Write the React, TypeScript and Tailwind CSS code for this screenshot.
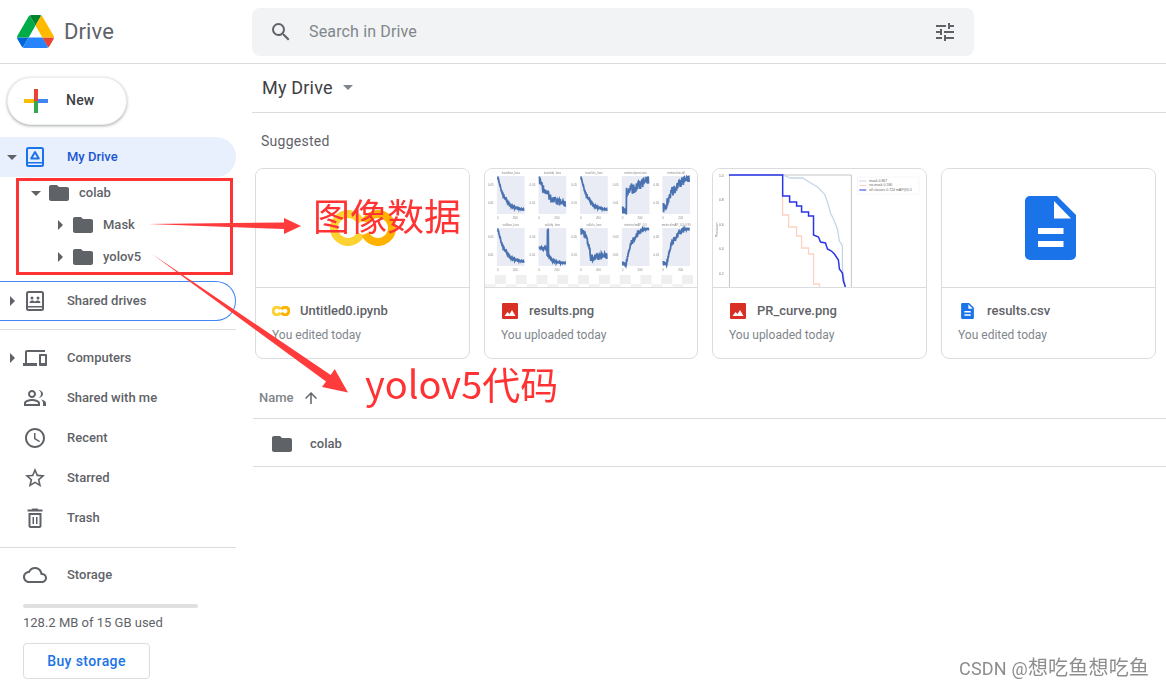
import type { ReactNode } from "react";

const grey = "#5f6368";

const Mi = ({ d, size = 24, color = grey }: { d: string; size?: number; color?: string }) => (
  <svg width={size} height={size} viewBox="0 0 24 24" fill={color} className="shrink-0">
    <path d={d} />
  </svg>
);

const folder = "M10 4H4c-1.1 0-2 .9-2 2v12c0 1.1.9 2 2 2h16c1.1 0 2-.9 2-2V8c0-1.1-.9-2-2-2h-8l-2-2z";

const Caret = ({ open = false }: { open?: boolean }) =>
  open ? (
    <span className="h-0 w-0 shrink-0 border-x-[5px] border-t-[5px] border-x-transparent border-t-[#5f6368]" />
  ) : (
    <span className="h-0 w-0 shrink-0 border-y-[5px] border-l-[5px] border-y-transparent border-l-[#5f6368]" />
  );

const DriveLogo = () => (
  <svg width="37" height="33" viewBox="0 0 87.3 78" className="shrink-0">
    <path d="m6.6 66.85 3.85 6.65c.8 1.4 1.95 2.5 3.3 3.3l13.75-23.8h-27.5c0 1.55.4 3.1 1.2 4.5z" fill="#0066da" />
    <path d="m43.65 25-13.75-23.8c-1.35.8-2.5 1.9-3.3 3.3l-25.4 44a9.06 9.06 0 0 0 -1.2 4.5h27.5z" fill="#00ac47" />
    <path d="m73.55 76.8c1.35-.8 2.5-1.9 3.3-3.3l1.6-2.75 7.65-13.25c.8-1.4 1.2-2.95 1.2-4.5h-27.502l5.852 11.5z" fill="#ea4335" />
    <path d="m43.65 25 13.75-23.8c-1.35-.8-2.9-1.2-4.5-1.2h-18.5c-1.6 0-3.15.45-4.5 1.2z" fill="#00832d" />
    <path d="m59.8 53h-32.3l-13.75 23.8c1.35.8 2.9 1.2 4.5 1.2h50.8c1.6 0 3.15-.45 4.5-1.2z" fill="#2684fc" />
    <path d="m73.4 26.5-12.7-22c-.8-1.4-1.95-2.5-3.3-3.3l-13.75 23.8 16.15 28h27.45c0-1.55-.4-3.1-1.2-4.5z" fill="#ffba00" />
  </svg>
);

const PlusIcon = () => (
  <svg width="24" height="24" viewBox="0 0 24 24" className="shrink-0">
    <rect x="0" y="10" width="12" height="4" fill="#fbbc04" />
    <rect x="12" y="10" width="12" height="4" fill="#4285f4" />
    <rect x="10" y="0" width="4" height="12" fill="#ea4335" />
    <rect x="10" y="12" width="4" height="12" fill="#34a853" />
  </svg>
);

const MyDriveIcon = () => (
  <svg width="18" height="20" viewBox="0 0 18 20" className="shrink-0">
    <rect x="1" y="1" width="16" height="18" rx="1.5" fill="none" stroke="#1a73e8" strokeWidth="2" />
    <path d="M9 5 12.800 11.500H5.200z" fill="none" stroke="#1a73e8" strokeWidth="2" strokeLinejoin="round" />
    <rect x="2" y="15" width="14" height="1.500" fill="#1a73e8" />
  </svg>
);

const SharedDrivesIcon = () => (
  <svg width="18" height="20" viewBox="0 0 18 20" className="shrink-0">
    <rect x="1" y="1" width="16" height="18" rx="1.5" fill="none" stroke={grey} strokeWidth="2" />
    <circle cx="6" cy="7" r="1.500" fill={grey} />
    <circle cx="12" cy="7" r="1.500" fill={grey} />
    <path d="M3.500 12c0-1.500 1.200-2.500 2.500-2.500s2.300.5 3 1.200c.7-.7 1.700-1.200 3-1.200s2.500 1 2.500 2.500z" fill={grey} />
    <rect x="2" y="15" width="14" height="1.500" fill={grey} />
  </svg>
);

const TreeRow = ({ label, indent, open }: { label: string; indent: string; open?: boolean }) => (
  <div className={`flex h-8 items-center ${indent}`}>
    <span className="flex w-2 justify-center">
      <Caret open={open} />
    </span>
    <span className="ml-[7px]">
      <Mi d={folder} />
    </span>
    <span className="ml-2 text-[13px] font-medium text-[#5f6368]">{label}</span>
  </div>
);

const NavRow = ({ label, icon, caret }: { label: string; icon: ReactNode; caret?: boolean }) => (
  <div className="flex h-10 w-[236px] items-center">
    <span className="flex w-[23px] justify-center pl-[2px]">{caret && <Caret />}</span>
    <span className="flex w-6 justify-center">{icon}</span>
    <span className="ml-5 text-[13px] font-medium text-[#5f6368]">{label}</span>
  </div>
);

const Sidebar = () => (
  <aside className="w-[252px] shrink-0">
    <div className="pl-[7px] pt-[13px]">
      <button className="flex h-12 w-[120px] items-center rounded-full border border-[#eceef0] bg-white pb-px pl-4 shadow-[0_1px_3px_rgba(60,64,67,0.45)]">
        <PlusIcon />
        <span className="ml-[18px] text-[14px] font-medium tracking-[0.2px] text-[#3c4043]">New</span>
      </button>
    </div>

    <div className="mt-3 flex h-10 w-[236px] items-center rounded-r-full bg-[#e8f0fe]">
      <span className="flex w-[23px] justify-center pl-[1px]">
        <Caret open />
      </span>
      <span className="flex w-6 justify-center">
        <MyDriveIcon />
      </span>
      <span className="ml-5 text-[13px] font-medium text-[#1a56d0]">My Drive</span>
    </div>

    <TreeRow label="colab" indent="pl-8" open />
    <TreeRow label="Mask" indent="pl-14" />
    <TreeRow label="yolov5" indent="pl-14" />

    <div className="mt-2 flex h-10 w-[236px] items-center rounded-r-full border border-l-0 border-[#4285f4]">
      <span className="flex w-[23px] justify-center pl-[2px]">
        <Caret />
      </span>
      <span className="flex w-6 justify-center">
        <SharedDrivesIcon />
      </span>
      <span className="ml-5 text-[13px] font-medium text-[#5f6368]">Shared drives</span>
    </div>

    <div className="mt-2 h-px w-[236px] bg-[#dadce0]" />

    <div className="mt-2">
      <NavRow label="Computers" caret icon={<Mi d="M4 6h18V4H4c-1.100 0-2 .9-2 2v11H0v3h14v-3H4V6zm19 2h-6c-.55 0-1 .45-1 1v10c0 .55.45 1 1 1h6c.55 0 1-.45 1-1V9c0-.55-.45-1-1-1zm-1 9h-4v-7h4v7z" />} />
      <NavRow label="Shared with me" icon={<Mi d="M9 12c2.200 0 4-1.800 4-4S11.200 4 9 4 5 5.800 5 8s1.800 4 4 4zm0-6c1.100 0 2 .9 2 2s-.9 2-2 2-2-.9-2-2 .9-2 2-2zm0 7c-2.700 0-8 1.300-8 4v3h16v-3c0-2.700-5.300-4-8-4zm6 5H3v-.99C3.200 16.300 6.300 15 9 15s5.800 1.300 6 2v1zM15.500 4.100c1.300.6 2.500 2 2.500 3.900s-1.200 3.300-2.500 3.900c2-.1 4.500-1.700 4.500-3.900s-2.500-3.800-4.500-3.900zM18 13.500c1.400 1 2 2.300 2 3.500v3h3v-3c0-1.800-2.500-3-5-3.500z" />} />
      <NavRow label="Recent" icon={<Mi d="M11.990 2C6.470 2 2 6.480 2 12s4.470 10 9.990 10C17.520 22 22 17.520 22 12S17.520 2 11.990 2zM12 20c-4.420 0-8-3.580-8-8s3.580-8 8-8 8 3.580 8 8-3.580 8-8 8zm.5-13H11v6l5.250 3.150.75-1.230-4.500-2.670z" />} />
      <NavRow label="Starred" icon={<Mi d="M22 9.240l-7.190-.62L12 2 9.190 8.630 2 9.240l5.460 4.730L5.820 21 12 17.270 18.180 21l-1.630-7.030L22 9.240zM12 15.400l-3.760 2.270 1-4.280-3.320-2.880 4.380-.38L12 6.100l1.710 4.040 4.380.38-3.320 2.880 1 4.280L12 15.400z" />} />
      <NavRow label="Trash" icon={<Mi d="M5.500 20c0 1.100.9 2 2 2h9c1.100 0 2-.9 2-2V7h-13v13zM7.500 9h9v11h-9V9zm8-5.500-1-1h-5l-1 1H4.500v2h15v-2zM9.500 11H11v7H9.500zm3.500 0h1.500v7H13z" />} />
    </div>

    <div className="mt-[9px] h-px w-[236px] bg-[#dadce0]" />

    <div className="mt-[7px] flex h-10 items-center">
      <span className="ml-[23px] flex w-6 justify-center">
        <Mi d="M19.350 10.040C18.670 6.590 15.640 4 12 4 9.110 4 6.600 5.640 5.350 8.040 2.340 8.360 0 10.910 0 14c0 3.310 2.690 6 6 6h13c2.760 0 5-2.240 5-5 0-2.640-2.050-4.780-4.650-4.960zM19 18H6c-2.210 0-4-1.790-4-4 0-2.050 1.530-3.760 3.560-3.970l1.070-.11.5-.95C8.080 7.140 9.940 6 12 6c2.620 0 4.880 1.860 5.390 4.430l.3 1.500 1.530.11c1.560.1 2.780 1.410 2.780 2.960 0 1.650-1.350 3-3 3z" />
      </span>
      <span className="ml-5 text-[13px] font-medium text-[#5f6368]">Storage</span>
    </div>
    <div className="ml-[23px] mt-[9px] h-1 w-[175px] rounded-full bg-[#e0e0e0]" />
    <p className="ml-[23px] mt-[6px] text-[13px] leading-[18px] text-[#5f6368]">128.2 MB of 15 GB used</p>
    <button className="ml-[23px] mt-[11px] h-[36px] w-[127px] rounded border border-[#dadce0] bg-white text-[14px] font-medium tracking-[0.4px] text-[#1a73e8]">
      Buy storage
    </button>
  </aside>
);

// small matplotlib style plots of the results.png thumbnail
const plots = [
  { x: 12, y: 7, kind: "down", noise: 3, title: "train/box_loss" },
  { x: 54, y: 7, kind: "slow", noise: 8, title: "train/obj_loss" },
  { x: 96, y: 7, kind: "down", noise: 3, title: "train/cls_loss" },
  { x: 138, y: 7, kind: "jump", noise: 11, title: "metrics/precision" },
  { x: 179, y: 7, kind: "up", noise: 10, title: "metrics/recall" },
  { x: 12, y: 59, kind: "down", noise: 3, title: "val/box_loss" },
  { x: 54, y: 59, kind: "spike", noise: 3, title: "val/obj_loss" },
  { x: 96, y: 59, kind: "plateau", noise: 8, title: "val/cls_loss" },
  { x: 138, y: 59, kind: "up2", noise: 5, title: "metrics/mAP_0.5" },
  { x: 179, y: 59, kind: "up2", noise: 6, title: "metrics/mAP_0.5:0.95" },
];

// height above the plot floor for each kind of run
const level = (kind: string, t: number, i: number) => {
  if (kind === "down") return 2 + 34 * Math.exp(-t * 3.6);
  if (kind === "slow") return 5 + 28 * Math.exp(-t * 2.2);
  if (kind === "plateau") return t < 0.35 ? 34 - t * 20 - (t > 0.2 ? (t - 0.2) * 100 : 0) : 8;
  if (kind === "spike") return t < 0.3 ? 17 : t < 0.36 ? (i % 2 ? 35 : 8) : 1 + 8 * Math.exp(-(t - 0.36) * 5);
  if (kind === "jump") return t < 0.15 ? 1 : 20 + 12 * t;
  if (kind === "up") return t < 0.12 ? 5 : 36 * (1 - Math.exp(-t * 2.6));
  return t < 0.12 ? 1 : 37 * (1 - Math.exp(-(t - 0.12) * 4));
};

const curve = (kind: string, noise: number) => {
  const pts: string[] = [];
  for (let i = 0; i <= 80; i++) {
    const t = i / 80;
    const n = Math.sin(i * 12.9898) * 43758.5453;
    const r = (n - Math.floor(n) - 0.5) * noise;
    const y = 37 - level(kind, t, i) + r;
    pts.push(`${(t * 26 + 1).toFixed(1)},${Math.min(37.5, Math.max(0.5, y)).toFixed(1)}`);
  }
  return pts.join(" ");
};

const ResultsThumb = () => (
  <svg viewBox="0 0 214 118" className="h-full w-full blur-[0.6px]" preserveAspectRatio="none">
    {plots.map((p) => (
      <g key={p.title} transform={`translate(${p.x} ${p.y})`} fontFamily="Liberation Sans, sans-serif" fill="#888">
        <rect width="28" height="38" fill="#e9ecf5" />
        <polyline points={curve(p.kind, p.noise)} fill="none" stroke="#4a72b0" strokeWidth="1.800" />
        <text x="14" y="-2" fontSize="3" textAnchor="middle">{p.title}</text>
        <text x="-9" y="10" fontSize="3">0.05</text>
        <text x="-9" y="28" fontSize="3">0.01</text>
        <text x="0" y="43" fontSize="3">0</text>
        <text x="16" y="43" fontSize="3">200</text>
      </g>
    ))}
    {[10, 31, 52, 73, 94, 115, 136, 157, 178, 199].map((x) => (
      <rect key={x} x={x} y="106" width="11" height="9" fill="#efefef" />
    ))}
    {[0, 21, 42, 63, 84, 105, 126, 147, 168, 189].map((x) => (
      <rect key={x} x={x} y="115" width="11" height="3" fill="#f3f3f3" />
    ))}
  </svg>
);

const PrThumb = () => (
  <svg viewBox="0 0 214 118" className="h-full w-full blur-[0.4px]" preserveAspectRatio="none">
    <path d="M16.500 118V6H139V118" fill="none" stroke="#c4c4c4" strokeWidth="1" />
    <polyline points="70,6 78,9 90,9 95,12 105,18 112,25 115,33 118,44 121,50 125,60 127,72 130,77 130,100 132,112 133,118" fill="none" stroke="#c4d5ea" strokeWidth="1.300" />
    <polyline points="70,27 70,46 76,46 76,58 84,58 84,67 89,67 89,79 96,79 96,85 101,85 101,115 107,115 107,118" fill="none" stroke="#fdd2c4" strokeWidth="1.300" />
    <polyline points="16,6 70,6 70,27 77,27 77,33 84,33 84,37 89,37 89,43 96,43 96,47 101,47 101,66 106,68 108,73 113,74 115,80 119,82 122,85 126,91 127,100 130,104 131,112 133,118" fill="none" stroke="#2a35e8" strokeWidth="1.500" />
    {[
      ["1.0", 8],
      ["0.8", 32],
      ["0.6", 57],
      ["0.4", 81],
      ["0.2", 106],
    ].map(([t, y]) => (
      <text key={t} x="6" y={y} fontSize="3.500" fill="#777" fontFamily="Liberation Sans, sans-serif">{t}</text>
    ))}
    <text x="5" y="68" fontSize="3.500" fill="#777" fontFamily="Liberation Sans, sans-serif" transform="rotate(-90 5 68)">Precision</text>
    <rect x="145" y="8" width="62" height="17" fill="#fff" stroke="#eeeeee" strokeWidth="0.5" />
    <path d="M147 12h7" stroke="#c4d5ea" />
    <path d="M147 16.500h7" stroke="#fdd2c4" />
    <path d="M147 21h7" stroke="#2a35e8" />
    <text x="157" y="13" fontSize="3.500" fill="#666" fontFamily="Liberation Sans, sans-serif">mask 0.867</text>
    <text x="157" y="17.500" fontSize="3.500" fill="#666" fontFamily="Liberation Sans, sans-serif">no-mask 0.580</text>
    <text x="157" y="22" fontSize="3.500" fill="#666" fontFamily="Liberation Sans, sans-serif">all classes 0.724 mAP@0.5</text>
  </svg>
);

const ColabMark = ({ width, height, stroke = 8 }: { width: number; height: number; stroke?: number }) => (
  <svg width={width} height={height} viewBox="0 0 66 36" className="shrink-0">
    <path d="M30.700 12.100A14 14 0 1 0 30.700 23.900" fill="none" stroke="#ffd233" strokeWidth={stroke} />
    <path d="M35.300 12.100A14 14 0 1 1 35.300 23.900" fill="none" stroke="#ffb300" strokeWidth={stroke} />
  </svg>
);

const DocIcon = ({ width, height }: { width: number; height: number }) => (
  <svg width={width} height={height} viewBox="0 0 51 64" className="shrink-0">
    <path d="M5 0H32L51 19V59a5 5 0 0 1-5 5H5a5 5 0 0 1-5-5V5a5 5 0 0 1 5-5z" fill="#1a73e8" />
    <path d="M29 5 46 22.500H29z" fill="#fff" />
    <rect x="13" y="32" width="25.500" height="6" fill="#fff" />
    <rect x="13" y="45" width="25.500" height="6" fill="#fff" />
  </svg>
);

const ImageIcon = () => (
  <svg width="16" height="16" viewBox="0 0 16 16" className="shrink-0">
    <rect width="16" height="16" rx="1" fill="#d93025" />
    <path d="M2.500 13 5.500 9 7.500 11 10 7 13.500 13z" fill="#fff" />
  </svg>
);

const Card = ({ thumb, icon, name, sub, row }: { thumb: ReactNode; icon: ReactNode; name: string; sub: string; row: string }) => (
  <div className="h-[191px] overflow-hidden rounded-lg border border-[#dadce0] bg-white">
    <div className="flex h-[118px] items-center justify-center bg-white">{thumb}</div>
    <div className="border-t border-[#dadce0] px-4 pt-[13px]">
      <div className={`flex h-[20px] items-center ${row}`}>
        {icon}
        <span className="text-[13px] font-medium text-[#5f6368]">{name}</span>
      </div>
      <p className="mt-[5px] text-[12px] leading-[18px] text-[#80868b]">{sub}</p>
    </div>
  </div>
);

const Main = () => (
  <main className="min-w-0 flex-1">
    <div className="flex h-[49px] items-center border-b border-[#dadce0] pb-px pl-[10px]">
      <span className="text-[18px] tracking-[0.2px] text-[#3c4043]">My Drive</span>
      <span className="ml-[10px] h-0 w-0 border-x-[5px] border-t-[5px] border-x-transparent border-t-[#80868b]" />
    </div>
    <div className="flex h-[55px] items-center pl-[9px] pt-[2px] text-[14px] tracking-[0.25px] text-[#5f6368]">Suggested</div>
    <div className="grid grid-cols-[215px_214px_215px_215px] gap-[14px] pl-[3px]">
      <Card
        thumb={<ColabMark width={66} height={36} />}
        icon={<ColabMark width={18} height={10} stroke={11} />}
        name="Untitled0.ipynb"
        sub="You edited today"
        row="gap-[10px]"
      />
      <Card thumb={<ResultsThumb />} icon={<ImageIcon />} name="results.png" sub="You uploaded today" row="ml-px gap-[11px]" />
      <Card thumb={<PrThumb />} icon={<ImageIcon />} name="PR_curve.png" sub="You uploaded today" row="ml-px gap-[11px]" />
      <Card
        thumb={<div className="ml-1"><DocIcon width={51} height={64} /></div>}
        icon={<DocIcon width={13} height={16} />}
        name="results.csv"
        sub="You edited today"
        row="ml-[3px] gap-[13px]"
      />
    </div>
    <div className="ml-px flex h-[60px] items-end border-b border-[#dadce0] pb-[11px] pl-[6px]">
      <span className="text-[13px] font-medium text-[#80868b]">Name</span>
      <svg width="18" height="18" viewBox="0 0 24 24" fill={grey} className="ml-2">
        <path d="M4 12l1.410 1.410L11 7.830V20h2V7.830l5.580 5.590L20 12l-8-8-8 8z" />
      </svg>
    </div>
    <div className="ml-px flex h-12 items-center border-b border-[#dadce0] pl-[17px] pt-[2px]">
      <Mi d={folder} />
      <span className="ml-4 text-[13px] font-medium text-[#5f6368]">colab</span>
    </div>
  </main>
);

// red marks drawn over the screenshot, plus the site watermark
const Annotations = () => (
  <>
    <svg width="1166" height="687" className="pointer-events-none absolute left-0 top-0">
      <rect x="17.500" y="179.500" width="214" height="94" fill="none" stroke="#ff3333" strokeWidth="3" />
      <path d="M148 224 284 222.500V218L301 226 284 234V229z" fill="#ff3b3b" />
      <path d="M152 254 330.700 375 334.700 369 348 392.500 322 387 326 381.500z" fill="#ff3b3b" />
    </svg>
    <span className="absolute left-[313px] top-[188px] font-['Noto_Sans_CJK_SC',sans-serif] text-[37px] leading-[54px] text-[#ff3333]">图像数据</span>
    <span className="absolute left-[365px] top-[354px] font-['Noto_Sans_CJK_SC',sans-serif] text-[38px] leading-[57px] text-[#ff3333]">yolov5代码</span>
    <span className="absolute left-[959px] top-[655px] text-[18px] leading-[26px] tracking-[0.2px] text-[#8d8d8d]">
      CSDN @<span className="text-[20px]">想吃鱼想吃鱼</span>
    </span>
  </>
);

export default function App() {
  return (
    <div className="relative h-[687px] w-[1166px] overflow-hidden bg-white font-['Roboto','Noto_Sans_CJK_SC',sans-serif]">
      <header className="flex h-[64px] items-center border-b border-[#dadce0]">
        <div className="flex w-[252px] items-center pl-[17px]">
          <DriveLogo />
          <span className="ml-[10px] text-[22px] tracking-[0.1px] text-[#5f6368]">Drive</span>
        </div>
        <div className="flex h-12 w-[722px] items-center rounded-lg bg-[#f1f3f4] pl-[17px] pr-[17px]">
          <Mi d="M15.500 14h-.79l-.28-.27A6.471 6.471 0 0 0 16 9.500 6.500 6.500 0 1 0 9.500 16c1.610 0 3.090-.59 4.230-1.570l.27.28v.79l5 4.990L20.490 19l-4.990-5zm-6 0C7.010 14 5 11.990 5 9.500S7.010 5 9.500 5 14 7.010 14 9.500 11.990 14 9.500 14z" />
          <span className="ml-4 flex-1 text-[16px] tracking-[0.15px] text-[#80868b]">Search in Drive</span>
          <Mi d="M3 17v2h6v-2H3zM3 5v2h10V5H3zm10 16v-2h8v-2h-8v-2h-2v6h2zM7 9v2H3v2h4v2h2V9H7zm14 4v-2H11v2h10zm-6-4h2V7h4V5h-4V3h-2v6z" />
        </div>
      </header>
      <div className="flex">
        <Sidebar />
        <Main />
      </div>
      <Annotations />
    </div>
  );
}
